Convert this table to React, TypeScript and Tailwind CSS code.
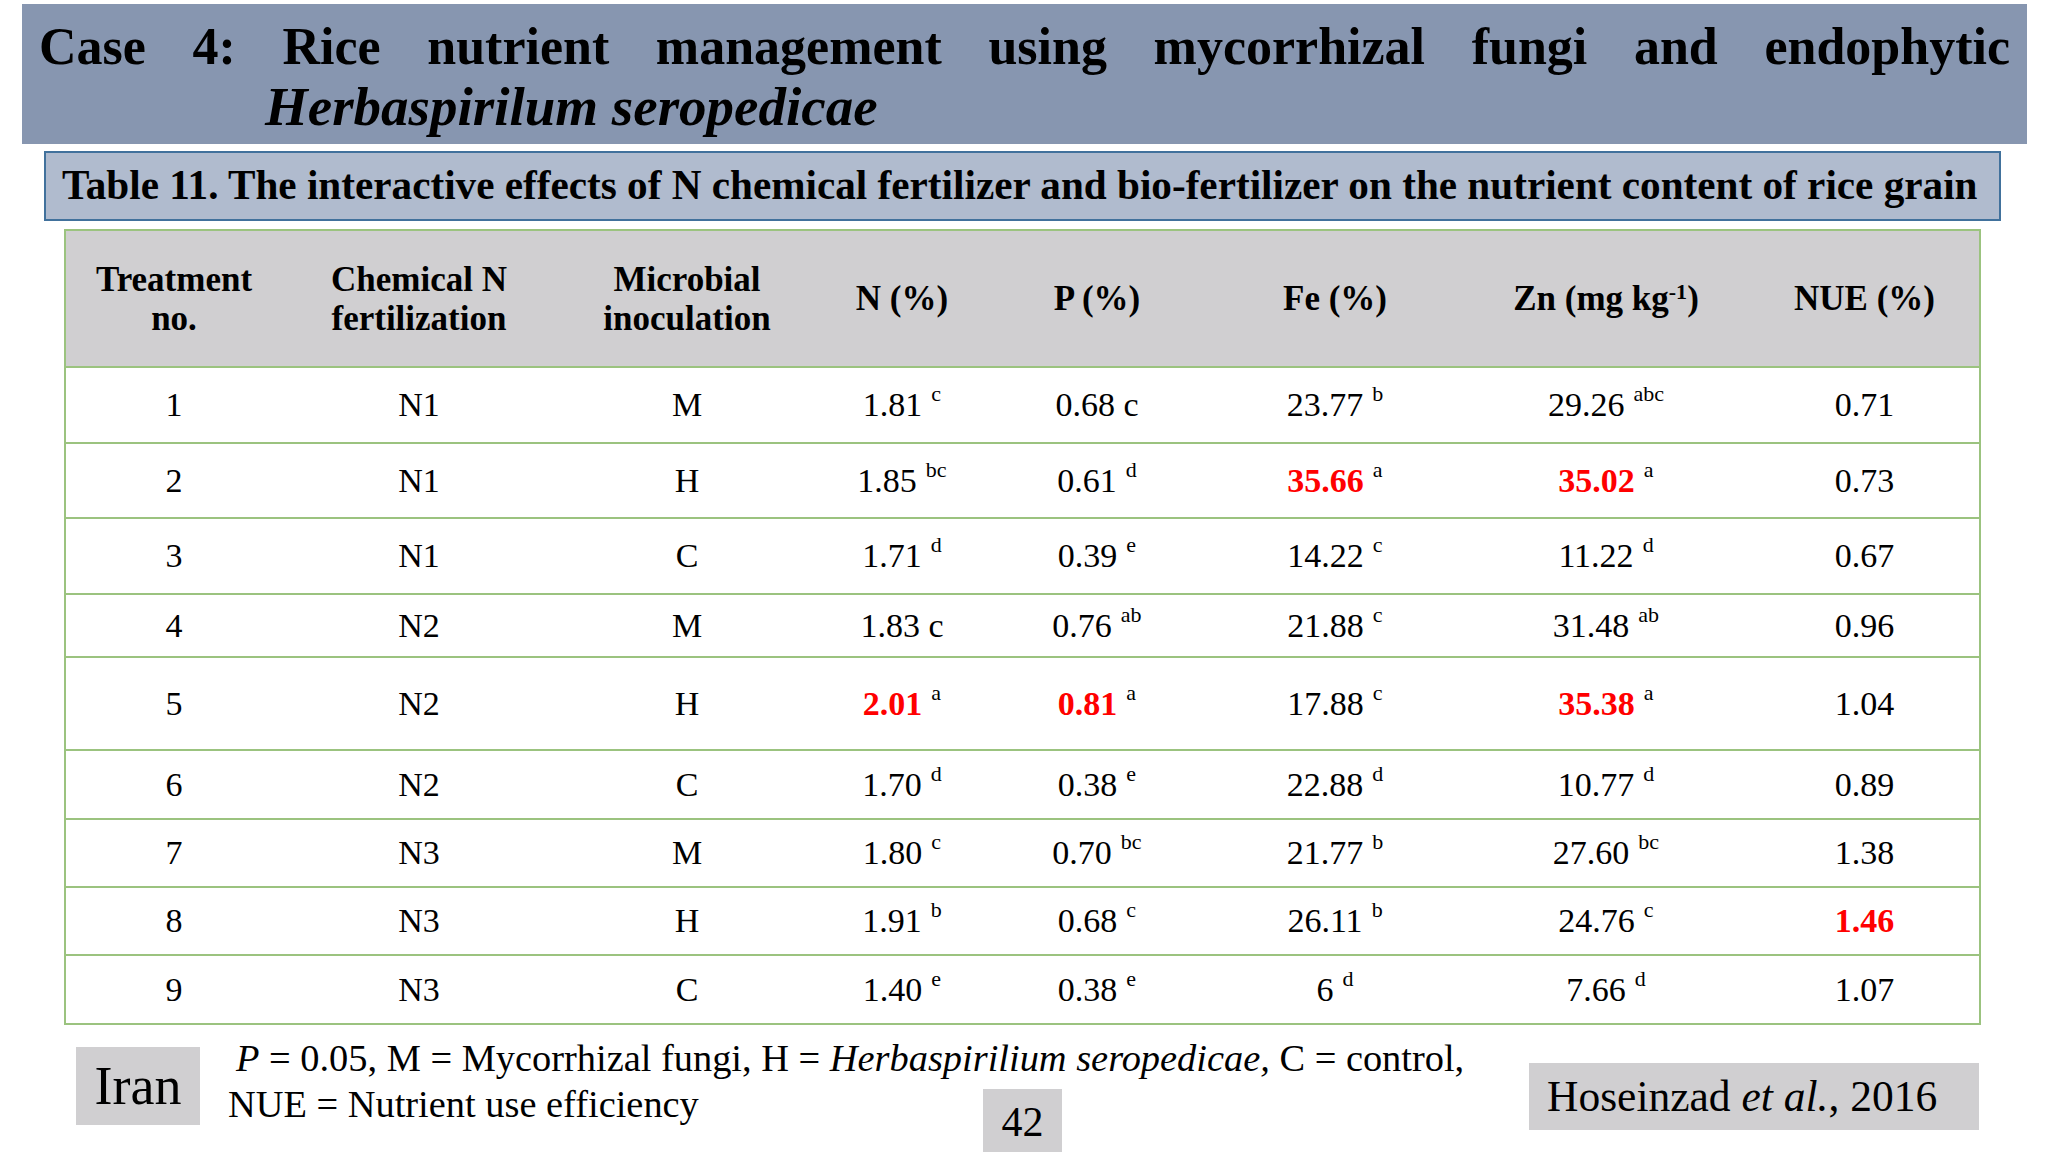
import React from "react";

type Val = { v: string; s?: string; red?: boolean };

interface Row {
  no: string;
  chem: string;
  mic: string;
  n: Val;
  p: Val;
  fe: Val;
  zn: Val;
  nue: Val;
  h: string;
}

const rows: Row[] = [
  { no: "1", chem: "N1", mic: "M", n: { v: "1.81", s: "c" }, p: { v: "0.68 c" }, fe: { v: "23.77", s: "b" }, zn: { v: "29.26", s: "abc" }, nue: { v: "0.71" }, h: "h-[76px]" },
  { no: "2", chem: "N1", mic: "H", n: { v: "1.85", s: "bc" }, p: { v: "0.61", s: "d" }, fe: { v: "35.66", s: "a", red: true }, zn: { v: "35.02", s: "a", red: true }, nue: { v: "0.73" }, h: "h-[75px]" },
  { no: "3", chem: "N1", mic: "C", n: { v: "1.71", s: "d" }, p: { v: "0.39", s: "e" }, fe: { v: "14.22", s: "c" }, zn: { v: "11.22", s: "d" }, nue: { v: "0.67" }, h: "h-[76px]" },
  { no: "4", chem: "N2", mic: "M", n: { v: "1.83 c" }, p: { v: "0.76", s: "ab" }, fe: { v: "21.88", s: "c" }, zn: { v: "31.48", s: "ab" }, nue: { v: "0.96" }, h: "h-[63px]" },
  { no: "5", chem: "N2", mic: "H", n: { v: "2.01", s: "a", red: true }, p: { v: "0.81", s: "a", red: true }, fe: { v: "17.88", s: "c" }, zn: { v: "35.38", s: "a", red: true }, nue: { v: "1.04" }, h: "h-[93px]" },
  { no: "6", chem: "N2", mic: "C", n: { v: "1.70", s: "d" }, p: { v: "0.38", s: "e" }, fe: { v: "22.88", s: "d" }, zn: { v: "10.77", s: "d" }, nue: { v: "0.89" }, h: "h-[69px]" },
  { no: "7", chem: "N3", mic: "M", n: { v: "1.80", s: "c" }, p: { v: "0.70", s: "bc" }, fe: { v: "21.77", s: "b" }, zn: { v: "27.60", s: "bc" }, nue: { v: "1.38" }, h: "h-[68px]" },
  { no: "8", chem: "N3", mic: "H", n: { v: "1.91", s: "b" }, p: { v: "0.68", s: "c" }, fe: { v: "26.11", s: "b" }, zn: { v: "24.76", s: "c" }, nue: { v: "1.46", red: true }, h: "h-[68px]" },
  { no: "9", chem: "N3", mic: "C", n: { v: "1.40", s: "e" }, p: { v: "0.38", s: "e" }, fe: { v: "6", s: "d" }, zn: { v: "7.66", s: "d" }, nue: { v: "1.07" }, h: "h-[67px]" },
];

const cols = "grid grid-cols-[216px_274px_262px_168px_222px_254px_288px_229px]";

function Cell({ val }: { val: Val }) {
  return (
    <div className="flex items-center justify-center leading-[40px]">
      <span className={val.red ? "font-bold text-[#ff0000]" : ""}>{val.v}</span>
      {val.s && (
        <sup className="ml-[9px] text-[22px]">{val.s}</sup>
      )}
    </div>
  );
}

function HeadCell({ children }: { children: React.ReactNode }) {
  return (
    <div className="flex items-center justify-center text-center font-bold leading-[39px]">
      <div>{children}</div>
    </div>
  );
}

export default function App() {
  return (
    <div className="w-[2048px] h-[1152px] overflow-hidden bg-white text-black [font-family:'Liberation_Serif','Times_New_Roman',serif]">
      {/* title band */}
      <div className="ml-[22px] mt-[4px] w-[2005px] h-[140px] bg-[#8796b0] px-[17px] pt-[13px] font-bold text-[52px] leading-[60px]">
        <div className="text-justify [text-align-last:justify]">
          Case 4: Rice nutrient management using mycorrhizal fungi and endophytic
        </div>
        <div className="pl-[226px] italic text-[55px]">Herbaspirilum seropedicae</div>
      </div>

      {/* table caption */}
      <div className="ml-[44px] mt-[7px] w-[1957px] h-[70px] border-2 border-[#41719c] bg-[#b0bbce] flex items-center pl-[16px]">
        <span className="font-bold text-[41.2px] leading-none whitespace-nowrap">
          Table 11. The interactive effects of N chemical fertilizer and bio-fertilizer on the nutrient content of rice grain
        </span>
      </div>

      {/* table */}
      <div className="ml-[64px] mt-[8px] w-[1917px] border-2 border-[#9bc37f] text-[34px]">
        <div className={`${cols} h-[137px] bg-[#d0cfd1] border-b-2 border-[#9bc37f] text-[35px]`}>
          <HeadCell>Treatment<br />no.</HeadCell>
          <HeadCell>Chemical N<br />fertilization</HeadCell>
          <HeadCell>Microbial<br />inoculation</HeadCell>
          <HeadCell>N (%)</HeadCell>
          <HeadCell>P (%)</HeadCell>
          <HeadCell>Fe (%)</HeadCell>
          <HeadCell>
            Zn (mg kg<sup className="text-[22px]">-1</sup>)
          </HeadCell>
          <HeadCell>NUE (%)</HeadCell>
        </div>
        {rows.map((r, i) => (
          <div
            key={r.no}
            className={`${cols} ${r.h} bg-white ${i < rows.length - 1 ? "border-b-2 border-[#9bc37f]" : ""}`}
          >
            <Cell val={{ v: r.no }} />
            <Cell val={{ v: r.chem }} />
            <Cell val={{ v: r.mic }} />
            <Cell val={r.n} />
            <Cell val={r.p} />
            <Cell val={r.fe} />
            <Cell val={r.zn} />
            <Cell val={r.nue} />
          </div>
        ))}
      </div>

      {/* footer */}
      <div className="flex items-start">
        <div className="ml-[76px] mt-[22px] w-[124px] h-[78px] bg-[#d0cfd1] flex items-center justify-center text-[54px] leading-none">
          Iran
        </div>
        <div className="ml-[28px] mt-[10px] text-[38.4px] leading-[46px]">
          <div className="pl-[8px] whitespace-nowrap">
            <i>P</i> = 0.05, M = Mycorrhizal fungi, H = <i>Herbaspirilium seropedicae,</i> C = control,
          </div>
          <div className="flex items-start">
            <span className="w-[755px] whitespace-nowrap">NUE = Nutrient use efficiency</span>
            <div className="mt-[8px] w-[79px] h-[70px] bg-[#d0cfd1] flex justify-center pt-[12px] text-[42px] leading-[42px]">
              42
            </div>
          </div>
        </div>
        <div className="ml-auto mr-[69px] mt-[38px] w-[450px] h-[67px] bg-[#d0cfd1] flex items-center pl-[18px] text-[43.5px] leading-none whitespace-nowrap">
          Hoseinzad&nbsp;<i>et al.</i>, 2016
        </div>
      </div>
    </div>
  );
}
